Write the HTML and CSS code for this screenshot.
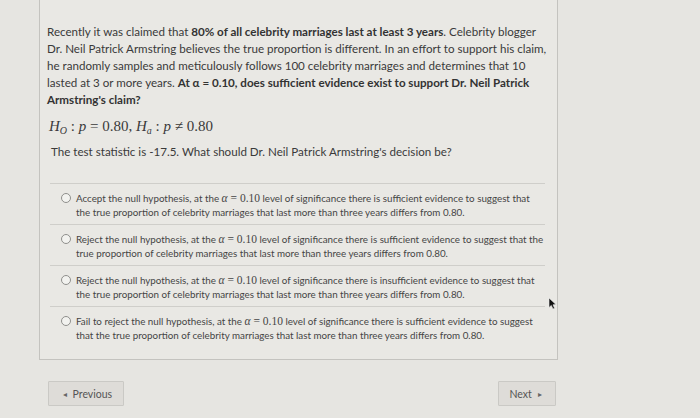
FILE: index.html
```html
<!DOCTYPE html>
<html>
<head>
<meta charset="utf-8">
<link rel="stylesheet" href="styles.css">
</head>
<body>
<div class="page">
  <div class="question">
    <p class="stem">Recently it was claimed that <b>80% of all celebrity marriages last at least 3 years</b>. Celebrity blogger Dr. Neil Patrick Armstring believes the true proportion is different. In an effort to support his claim, he randomly samples and meticulously follows 100 celebrity marriages and determines that 10 lasted at 3 or more years. <b>At α = 0.10, does sufficient evidence exist to support Dr. Neil Patrick Armstring's claim?</b></p>
    <p class="math"><i>H</i><sub><i>O</i></sub> : <i>p</i> = 0.80, <i>H</i><sub><i>a</i></sub> : <i>p</i> ≠ 0.80</p>
    <p class="prompt">The test statistic is -17.5. What should Dr. Neil Patrick Armstring's decision be?</p>
    <ul class="options">
      <li class="option"><span class="radio"></span><span class="label">Accept the null hypothesis, at the <span class="m"><i>α</i> = 0.10</span> level of significance there is sufficient evidence to suggest that the true proportion of celebrity marriages that last more than three years differs from 0.80.</span></li>
      <li class="option"><span class="radio"></span><span class="label">Reject the null hypothesis, at the <span class="m"><i>α</i> = 0.10</span> level of significance there is sufficient evidence to suggest that the true proportion of celebrity marriages that last more than three years differs from 0.80.</span></li>
      <li class="option"><span class="radio"></span><span class="label">Reject the null hypothesis, at the <span class="m"><i>α</i> = 0.10</span> level of significance there is insufficient evidence to suggest that the true proportion of celebrity marriages that last more than three years differs from 0.80.</span></li>
      <li class="option"><span class="radio"></span><span class="label">Fail to reject the null hypothesis, at the <span class="m"><i>α</i> = 0.10</span> level of significance there is sufficient evidence to suggest that the true proportion of celebrity marriages that last more than three years differs from 0.80.</span></li>
    </ul>
    <svg class="cursor" width="9" height="13" viewBox="0 0 9 13"><path d="M1 1 L1 10.5 L3.3 8.4 L5 12 L6.6 11.3 L5 7.8 L8 7.6 Z" fill="#111" stroke="#eee" stroke-width="0.6"/></svg>
  </div>
  <div class="nav">
    <button class="btn"><span class="tri">◂</span> Previous</button>
    <button class="btn">Next <span class="tri">▸</span></button>
  </div>
</div>
</body>
</html>
```
FILE: styles.css
```css
html, body {
  margin: 0;
  padding: 0;
  background: #e6e5e1;
}
body {
  width: 700px;
  height: 418px;
  overflow: hidden;
  font-family: Lato, "Open Sans", sans-serif;
  color: #3a3a3a;
}
.page {
  margin-left: 39px;
  width: 519px;
}
.question {
  position: relative;
  box-sizing: border-box;
  height: 360px;
  border-left: 1px solid #c4c3bf;
  border-right: 1px solid #c4c3bf;
  border-bottom: 1px solid #c4c3bf;
  padding: 23px 0 0 7px;
  background: #e9e8e4;
}
.stem {
  margin: 0;
  width: 500px;
  font-size: 11.6px;
  line-height: 17px;
}
.stem b { font-weight: 700; color: #333; }
.math {
  margin: 8px 0 0 2px;
  font-family: "Liberation Serif", "DejaVu Serif", serif;
  font-size: 15px;
  line-height: 20px;
  color: #3a3a3a;
}
.math sub { font-size: 10px; vertical-align: -3px; line-height: 0; }
.prompt {
  margin: 7px 0 0 4px;
  font-size: 11.6px;
  line-height: 17px;
}
.options {
  list-style: none;
  margin: 23px 12px 0 3px;
  padding: 0;
}
.option {
  display: flex;
  align-items: flex-start;
  box-sizing: border-box;
  border-top: 1px solid #cfceca;
  height: 41px;
  padding: 7px 0 0 11px;
  font-size: 9.8px;
  line-height: 14px;
  color: #454545;
}
.radio {
  flex: none;
  width: 8px;
  height: 8px;
  border: 1px solid #8f8f8c;
  border-radius: 50%;
  background: #f2f2ef;
  margin: 2px 5px 0 0;
}
.label { flex: 1; }
.m {
  font-family: "Liberation Serif", "DejaVu Serif", serif;
  font-size: 11.5px;
}
.cursor {
  position: absolute;
  left: 508px;
  top: 297px;
}
.nav {
  display: flex;
  justify-content: space-between;
  padding: 21px 2px 0 9px;
}
.btn {
  height: 25px;
  border: 1px solid #cac9c5;
  background: #dedcd8;
  font-family: Lato, "Open Sans", sans-serif;
  font-size: 10.5px;
  color: #555;
  border-radius: 1px;
  white-space: nowrap;
  padding: 0;
}
.btn:first-child { width: 76px; }
.btn:last-child { width: 58px; }
.tri { font-size: 8px; color: #666; vertical-align: 1px; margin: 0 3px; }
```
